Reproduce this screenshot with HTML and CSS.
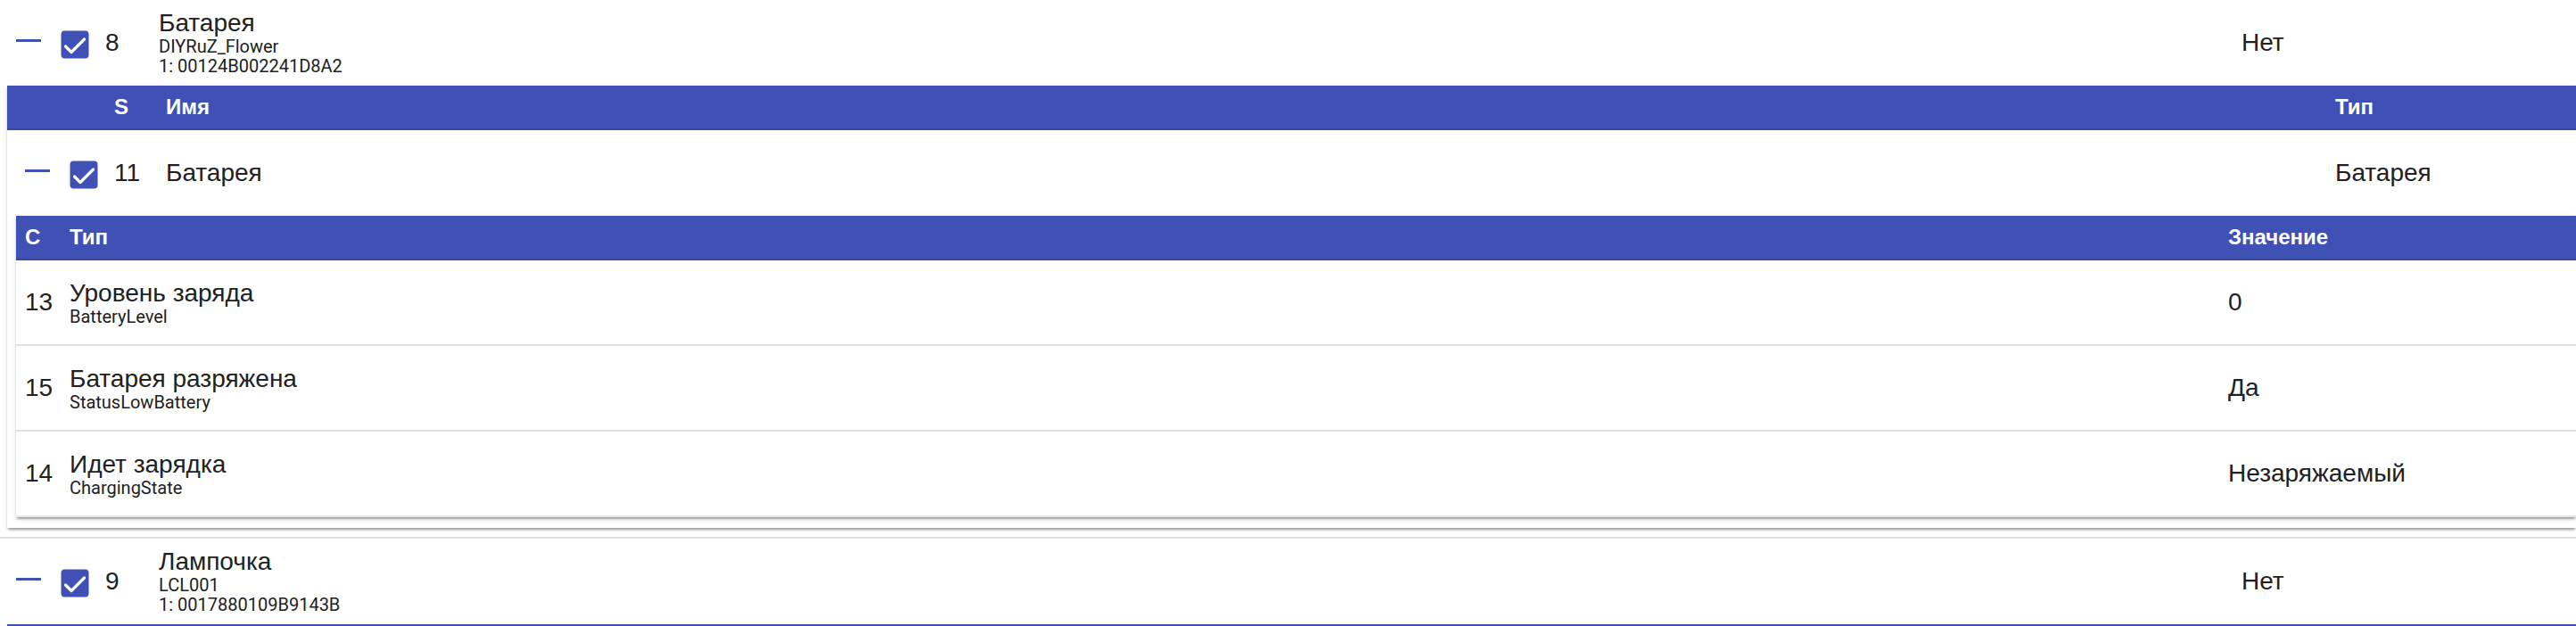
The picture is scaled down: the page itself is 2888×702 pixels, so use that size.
FILE: index.html
```html
<!DOCTYPE html>
<html lang="ru">
<head>
<meta charset="utf-8">
<title>Устройства</title>
<link rel="stylesheet" href="styles.css">
</head>
<body>
<div class="devices">

  <div class="dev-row">
    <span class="toggle"><span class="dash"></span></span>
    <span class="check"><svg viewBox="0 0 32 32" width="32" height="32"><rect x="0.5" y="0.5" width="31" height="31" rx="4" fill="#3f51b5"/><polyline points="5.5,18 12,24.5 26.5,10" fill="none" stroke="#fff" stroke-width="3.2" stroke-linecap="round" stroke-linejoin="round"/></svg></span>
    <span class="num">8</span>
    <div class="name-block">
      <div class="name">Батарея</div>
      <div class="sub">DIYRuZ_Flower</div>
      <div class="sub">1: 00124B002241D8A2</div>
    </div>
    <span class="value">Нет</span>
  </div>

  <div class="dev-detail">
    <div class="paper outer">
      <div class="ep-head">
        <span></span>
        <span></span>
        <span class="hcell">S</span>
        <span class="hcell">Имя</span>
        <span class="hcell">Тип</span>
      </div>
      <div class="ep-row">
        <span class="toggle"><span class="dash"></span></span>
        <span class="check"><svg viewBox="0 0 32 32" width="32" height="32"><rect x="0.5" y="0.5" width="31" height="31" rx="4" fill="#3f51b5"/><polyline points="5.5,18 12,24.5 26.5,10" fill="none" stroke="#fff" stroke-width="3.2" stroke-linecap="round" stroke-linejoin="round"/></svg></span>
        <span class="num">11</span>
        <span class="name">Батарея</span>
        <span class="value">Батарея</span>
      </div>
      <div class="ep-detail">
        <div class="paper inner">
          <div class="cl-head">
            <span class="hcell">С</span>
            <span class="hcell">Тип</span>
            <span class="hcell">Значение</span>
          </div>
          <div class="cl-row">
            <span class="num">13</span>
            <div class="name-block">
              <div class="name">Уровень заряда</div>
              <div class="sub">BatteryLevel</div>
            </div>
            <span class="value">0</span>
          </div>
          <div class="cl-row">
            <span class="num">15</span>
            <div class="name-block">
              <div class="name">Батарея разряжена</div>
              <div class="sub">StatusLowBattery</div>
            </div>
            <span class="value">Да</span>
          </div>
          <div class="cl-row">
            <span class="num">14</span>
            <div class="name-block">
              <div class="name">Идет зарядка</div>
              <div class="sub">ChargingState</div>
            </div>
            <span class="value">Незаряжаемый</span>
          </div>
        </div>
      </div>
    </div>
  </div>

  <div class="dev-row">
    <span class="toggle"><span class="dash"></span></span>
    <span class="check"><svg viewBox="0 0 32 32" width="32" height="32"><rect x="0.5" y="0.5" width="31" height="31" rx="4" fill="#3f51b5"/><polyline points="5.5,18 12,24.5 26.5,10" fill="none" stroke="#fff" stroke-width="3.2" stroke-linecap="round" stroke-linejoin="round"/></svg></span>
    <span class="num">9</span>
    <div class="name-block">
      <div class="name">Лампочка</div>
      <div class="sub">LCL001</div>
      <div class="sub">1: 0017880109B9143B</div>
    </div>
    <span class="value">Нет</span>
  </div>

  <div class="dev-detail">
    <div class="paper outer">
      <div class="ep-head"></div>
    </div>
  </div>

</div>
</body>
</html>
```

FILE: styles.css
```css
html, body {
  margin: 0;
  padding: 0;
  background: #ffffff;
}

body {
  width: 2888px;
  height: 702px;
  overflow: hidden;
  font-family: "Liberation Sans", Arial, sans-serif;
  font-size: 28px;
  color: #212121;
}

.devices {
  display: flex;
  flex-direction: column;
}

/* ---------- level 1: devices ---------- */
.dev-row {
  display: grid;
  grid-template-columns: 68px 50px 60px 2335px 1fr;
  align-items: center;
  height: 96px;
}

.toggle {
  display: flex;
  align-items: center;
}

.dev-row .toggle {
  padding-left: 18px;
}

.dash {
  display: block;
  width: 28px;
  height: 3px;
  background: #3f51b5;
  margin-bottom: 6px;
}

.check {
  display: flex;
  width: 32px;
  height: 32px;
  margin-top: 4px;
}

.check svg {
  display: block;
}

.num {
  line-height: 30px;
}

.name {
  line-height: 30px;
  white-space: nowrap;
}

.sub {
  font-family: Roboto, "Liberation Sans", Arial, sans-serif;
  font-size: 20px;
  line-height: 22px;
  white-space: nowrap;
}

.value {
  line-height: 30px;
  white-space: nowrap;
}

.dev-detail {
  padding: 0 0 10px 8px;
  border-bottom: 2px solid #e0e0e0;
}

/* ---------- papers ---------- */
.paper {
  background: #ffffff;
  box-shadow: 0 4px 2px -2px rgba(0, 0, 0, 0.2),
              0 2px 2px 0 rgba(0, 0, 0, 0.14),
              0 2px 6px 0 rgba(0, 0, 0, 0.12);
}

.hcell {
  color: #ffffff;
  font-weight: bold;
  font-size: 24px;
  white-space: nowrap;
}

/* ---------- level 2: endpoints ---------- */
.ep-head,
.ep-row {
  display: grid;
  grid-template-columns: 70px 50px 58px 2432px 1fr;
  align-items: center;
}

.ep-head {
  height: 48px;
  background: #3f51b5;
  border-bottom: 2px solid #3646a3;
}

.ep-row {
  height: 96px;
}

.ep-row .toggle {
  padding-left: 20px;
}

.ep-detail {
  padding: 0 0 12px 10px;
}

/* ---------- level 3: clusters ---------- */
.cl-head,
.cl-row {
  display: grid;
  grid-template-columns: 50px 2420px 1fr;
  align-items: center;
  padding-left: 10px;
}

.cl-head {
  height: 48px;
  background: #3f51b5;
  border-bottom: 2px solid #3646a3;
}

.cl-row {
  height: 94px;
  border-bottom: 2px solid #e0e0e0;
}

.cl-row:last-child {
  border-bottom-color: #e8e8e8;
}

.cl-row .name-block {
  padding-top: 2px;
}
```
